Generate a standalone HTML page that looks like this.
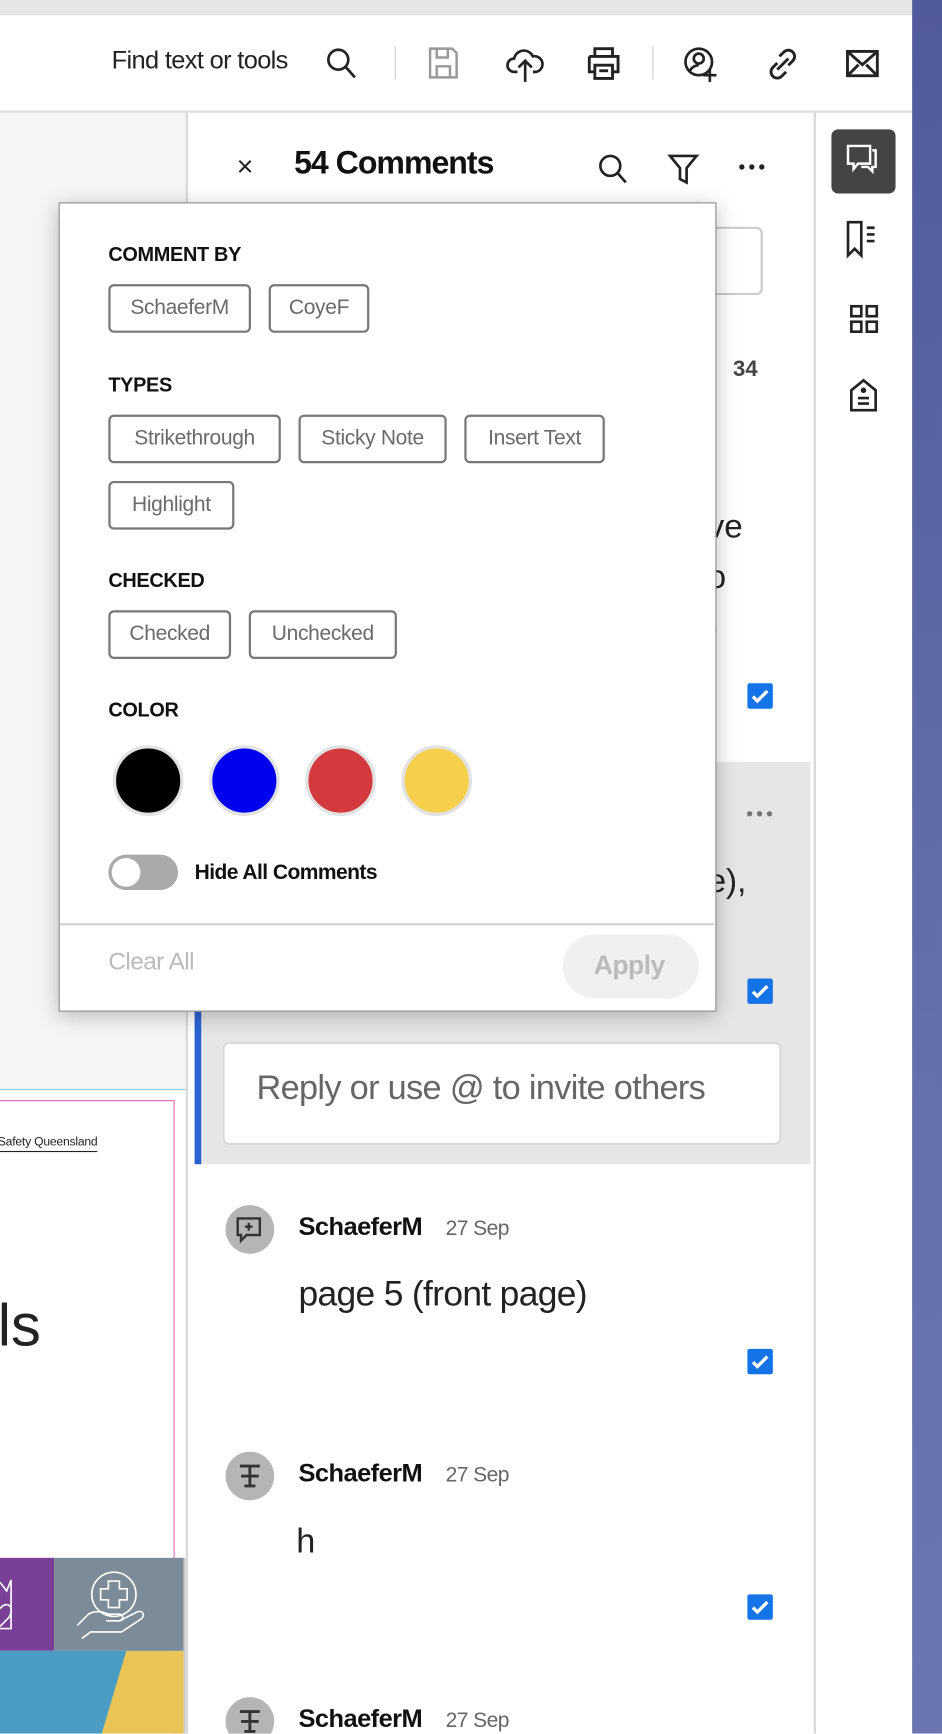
<!DOCTYPE html>
<html><head><meta charset="utf-8">
<style>
html,body{margin:0;padding:0;width:942px;height:1734px;overflow:hidden;background:#fff;}
#s{position:absolute;left:0;top:0;width:852px;height:1568px;transform:scale(1.10563);transform-origin:0 0;font-family:"Liberation Sans",sans-serif;overflow:hidden;}
.a{position:absolute;}
.t{position:absolute;white-space:nowrap;line-height:1;}
.chip{position:absolute;height:40px;border:2px solid #777;border-radius:5px;color:#6a6a6a;font-size:19px;line-height:40px;text-align:center;box-sizing:content-box;letter-spacing:-0.3px;}
.h{position:absolute;font-size:18px;font-weight:bold;color:#111;letter-spacing:-0.3px;}
.cb{position:absolute;width:23px;height:23px;background:#1473e6;border-radius:2px;}
.av{position:absolute;width:44px;height:44px;border-radius:50%;background:#b5b5b5;}
.nm{position:absolute;font-size:23px;font-weight:bold;color:#111;letter-spacing:-0.5px;}
.dt{position:absolute;font-size:19px;color:#666;letter-spacing:-0.5px;}
.circ{position:absolute;width:58px;height:58px;border-radius:50%;border:3px solid #e2e2e2;}
svg{position:absolute;overflow:visible;}
</style></head><body><div id="s">
<div class="a" style="left:0;top:0;width:825px;height:14px;background:#e6e6e6"></div>
<div class="a" style="left:0;top:14px;width:825px;height:86px;background:#fff;border-bottom:2px solid #dcdcdc"></div>
<div class="t" style="left:101px;top:43px;font-size:23px;color:#222;letter-spacing:-0.6px">Find text or tools</div>
<svg style="left:294px;top:42px" width="30" height="30" fill="none" stroke="#222" stroke-width="2.4"><circle cx="12" cy="12" r="9"/><path d="M19 19l8 9"/></svg>
<div class="a" style="left:357px;top:42px;width:1px;height:30px;background:#ccc"></div>
<svg style="left:387px;top:42px" width="28" height="30" fill="none" stroke="#999" stroke-width="2.2"><path d="M2 2h20l4 4v22H2z"/><path d="M8 2v8h10V2M8 28v-10h12v10"/></svg>
<svg style="left:458px;top:40px" width="34" height="34" fill="none" stroke="#222" stroke-width="2.4"><path d="M10 25H7a6 6 0 0 1 0-12 9 9 0 0 1 17-2 6 6 0 0 1 3 14h-3"/><path d="M17 34V15M11 21l6-6 6 6"/></svg>
<svg style="left:530px;top:43px" width="32" height="30" fill="none" stroke="#222" stroke-width="2.6"><path d="M8 8V1h16v7M3 8h26v14h-5M8 22H3V8"/><path d="M8 16h16v12H8z"/><path d="M12 21h8"/></svg>
<div class="a" style="left:590px;top:42px;width:1px;height:30px;background:#ccc"></div>
<svg style="left:618px;top:42px" width="34" height="34" fill="none" stroke="#222" stroke-width="2.4"><circle cx="14" cy="14" r="12"/><circle cx="14" cy="11" r="4.5"/><path d="M6 22c2-4 6-5 8-5"/><path d="M24 20v12M18 26h12"/></svg>
<svg style="left:692px;top:42px" width="32" height="32" fill="none" stroke="#222" stroke-width="2.6"><path d="M13 9l4-4a5 5 0 0 1 8 8l-4 4M19 23l-4 4a5 5 0 0 1-8-8l4-4M11 21l10-10"/></svg>
<svg style="left:765px;top:45px" width="30" height="26" fill="none" stroke="#222" stroke-width="2.6"><rect x="1.5" y="1.5" width="27" height="22"/><path d="M1.5 1.5l13.5 12 13.5-12M1.5 23.5l10-10M28.5 23.5l-10-10"/></svg>

<div class="a" style="left:825px;top:0;width:27px;height:1568px;background:linear-gradient(#515a9c,#6570aa 60%,#6b76b0)"></div>

<div class="a" style="left:0;top:102px;width:168px;height:883px;background:#f5f5f5"></div>
<div class="a" style="left:0;top:985px;width:168px;height:583px;background:#fff;border-top:1px solid #7dd3ee"></div>
<div class="a" style="left:-2px;top:995px;width:158px;height:600px;border:1px solid #e86ab0"></div>
<div class="t" style="left:-2px;top:1028px;font-size:11px;color:#222;border-bottom:1px solid #222;padding-bottom:2px;letter-spacing:-0.2px">Safety Queensland</div>
<div class="t" style="left:-2px;top:1172px;font-size:54px;color:#222">ls</div>
<div class="a" style="left:0;top:1409px;width:49px;height:84px;background:#7a3f96"></div>
<div class="a" style="left:49px;top:1409px;width:117px;height:84px;background:#7b8b97"></div>
<svg style="left:0;top:1425px" width="30" height="50" fill="none" stroke="#fff" stroke-width="1.5"><path d="M0 6l6 8 4-10v44H0"/><path d="M0 30c6-8 14-2 8 8l-8 8"/></svg>
<svg style="left:68px;top:1420px" width="70" height="62" fill="none" stroke="#fff" stroke-width="1.5"><circle cx="35" cy="22" r="20"/><path d="M30 10h10v7h7v10h-7v7H30v-7h-7V17h7z"/><path d="M2 50l10-10c6-4 14-2 18 0h10a3 3 0 0 1 0 6H28M40 46l16-8c4-2 8 2 4 6L42 56H14l-8 6"/></svg>
<div class="a" style="left:0;top:1493px;width:166px;height:75px;background:#4a9cc3"></div>
<div class="a" style="left:92px;top:1493px;width:74px;height:75px;background:#e8c556;clip-path:polygon(30% 0,100% 0,100% 100%,0 100%)"></div>
<div class="a" style="left:166px;top:1409px;width:2px;height:159px;background:#ccc"></div>

<div class="a" style="left:168px;top:102px;width:2px;height:1466px;background:#d8d8d8"></div>
<div class="a" style="left:736px;top:102px;width:2px;height:1466px;background:#d8d8d8"></div>
<div class="t" style="left:214px;top:137px;font-size:26px;color:#222">×</div>
<div class="t" style="left:266px;top:134px;font-size:29px;font-weight:bold;color:#111;letter-spacing:-0.9px">54 Comments</div>
<svg style="left:540px;top:138px" width="30" height="30" fill="none" stroke="#222" stroke-width="2.4"><circle cx="12" cy="12" r="9"/><path d="M19 19l7 8"/></svg>
<svg style="left:604px;top:138px" width="28" height="30" fill="none" stroke="#222" stroke-width="2.4"><path d="M2 3h24L17 14v13l-6-3V14z"/></svg>
<svg style="left:668px;top:148px" width="26" height="6" fill="#222"><circle cx="3" cy="3" r="2.4"/><circle cx="12" cy="3" r="2.4"/><circle cx="21" cy="3" r="2.4"/></svg>

<div class="a" style="left:600px;top:205px;width:88px;height:58px;border:2px solid #ccc;border-left:none;border-radius:0 6px 6px 0"></div>
<div class="t" style="left:663px;top:324px;font-size:20px;font-weight:bold;color:#444">34</div>
<div class="t" style="left:640px;top:462px;font-size:30px;color:#222">ve</div>
<div class="t" style="left:640px;top:508px;font-size:30px;color:#222">o</div>
<div class="t" style="left:640px;top:553px;font-size:30px;color:#222">)</div>
<div class="cb" style="left:676px;top:618px"></div>
<svg style="left:676px;top:618px" width="23" height="23" fill="none" stroke="#fff" stroke-width="3"><path d="M5 12l4 4 9-9"/></svg>

<div class="a" style="left:176px;top:689px;width:557px;height:364px;background:#e6e6e6"></div>
<div class="a" style="left:176px;top:870px;width:6px;height:183px;background:#2b62d2"></div>
<svg style="left:675px;top:733px" width="26" height="6" fill="#777"><circle cx="3" cy="3" r="2.4"/><circle cx="12" cy="3" r="2.4"/><circle cx="21" cy="3" r="2.4"/></svg>
<div class="t" style="left:640px;top:783px;font-size:30px;color:#222">e),</div>
<div class="cb" style="left:676px;top:885px"></div>
<svg style="left:676px;top:885px" width="23" height="23" fill="none" stroke="#fff" stroke-width="3"><path d="M5 12l4 4 9-9"/></svg>
<div class="a" style="left:202px;top:943px;width:502px;height:90px;background:#fff;border:1px solid #ccc;border-radius:5px"></div>
<div class="t" style="left:232px;top:968px;font-size:31px;color:#666;letter-spacing:-0.6px">Reply or use @ to invite others</div>

<div class="av" style="left:204px;top:1090px"></div>
<svg style="left:213px;top:1100px" width="26" height="26" fill="none" stroke="#333" stroke-width="2.2"><path d="M2 2h20v15H10l-5 5v-5H2z"/><path d="M12 6v7M8.5 9.5h7"/></svg>
<div class="nm" style="left:270px;top:1096px">SchaeferM</div>
<div class="dt" style="left:403px;top:1101px">27 Sep</div>
<div class="t" style="left:270px;top:1154px;font-size:32px;color:#222;letter-spacing:-0.6px">page 5 (front page)</div>
<div class="cb" style="left:676px;top:1220px"></div>
<svg style="left:676px;top:1220px" width="23" height="23" fill="none" stroke="#fff" stroke-width="3"><path d="M5 12l4 4 9-9"/></svg>

<div class="av" style="left:204px;top:1313px"></div>
<svg style="left:214px;top:1323px" width="24" height="24" fill="none" stroke="#333" stroke-width="2.6"><path d="M3 3h18M12 3v18M4 12h16M7 21h10"/></svg>
<div class="nm" style="left:270px;top:1319px">SchaeferM</div>
<div class="dt" style="left:403px;top:1324px">27 Sep</div>
<div class="t" style="left:268px;top:1378px;font-size:31px;color:#222">h</div>
<div class="cb" style="left:676px;top:1442px"></div>
<svg style="left:676px;top:1442px" width="23" height="23" fill="none" stroke="#fff" stroke-width="3"><path d="M5 12l4 4 9-9"/></svg>

<div class="av" style="left:204px;top:1535px"></div>
<svg style="left:214px;top:1545px" width="24" height="24" fill="none" stroke="#333" stroke-width="2.6"><path d="M3 3h18M12 3v18M4 12h16M7 21h10"/></svg>
<div class="nm" style="left:270px;top:1541px">SchaeferM</div>
<div class="dt" style="left:403px;top:1546px">27 Sep</div>

<div class="a" style="left:752px;top:117px;width:58px;height:58px;background:#444;border-radius:6px"></div>
<svg style="left:766px;top:131px" width="32" height="32" fill="none" stroke="#fff" stroke-width="2.2"><path d="M1 1h20v16H10l-4 5v-5H1z"/><path d="M23 5h3v15h-3v4l-4-4h-6"/></svg>
<svg style="left:766px;top:200px" width="32" height="34" fill="none" stroke="#222" stroke-width="2.4"><path d="M1 1h12v30l-6-6-6 6z"/><path d="M18 6h7M18 12h7M18 18h7"/></svg>
<svg style="left:769px;top:276px" width="26" height="26" fill="none" stroke="#222" stroke-width="2.4"><rect x="1" y="1" width="9" height="9"/><rect x="15" y="1" width="9" height="9"/><rect x="1" y="15" width="9" height="9"/><rect x="15" y="15" width="9" height="9"/></svg>
<svg style="left:769px;top:343px" width="26" height="30" fill="none" stroke="#222" stroke-width="2.4"><path d="M12 1l11 9v18H1V10z"/><circle cx="12" cy="10" r="1.3" fill="#222"/><path d="M7 17h10M7 22h10"/></svg>

<div class="a" style="left:53px;top:183px;width:593px;height:730px;background:#fff;border:1px solid #8a8a8a;box-shadow:0 4px 18px rgba(0,0,0,0.25)"></div>
<div class="h" style="left:98px;top:220px">COMMENT BY</div>
<div class="chip" style="left:98px;top:257px;width:125px">SchaeferM</div>
<div class="chip" style="left:243px;top:257px;width:87px">CoyeF</div>
<div class="h" style="left:98px;top:338px">TYPES</div>
<div class="chip" style="left:98px;top:375px;width:152px">Strikethrough</div>
<div class="chip" style="left:270px;top:375px;width:130px">Sticky Note</div>
<div class="chip" style="left:420px;top:375px;width:123px">Insert Text</div>
<div class="chip" style="left:98px;top:435px;width:110px">Highlight</div>
<div class="h" style="left:98px;top:515px">CHECKED</div>
<div class="chip" style="left:98px;top:552px;width:107px">Checked</div>
<div class="chip" style="left:225px;top:552px;width:130px">Unchecked</div>
<div class="h" style="left:98px;top:632px">COLOR</div>
<div class="circ" style="left:102px;top:674px;background:#000"></div>
<div class="circ" style="left:189px;top:674px;background:#0000f0"></div>
<div class="circ" style="left:276px;top:674px;background:#d43a3d"></div>
<div class="circ" style="left:363px;top:674px;background:#f6d04a"></div>
<div class="a" style="left:98px;top:773px;width:63px;height:32px;border-radius:16px;background:#aaa"></div>
<div class="a" style="left:101px;top:776px;width:26px;height:26px;border-radius:50%;background:#fff"></div>
<div class="t" style="left:176px;top:780px;font-size:19px;font-weight:bold;color:#111;letter-spacing:-0.5px">Hide All Comments</div>
<div class="a" style="left:54px;top:835px;width:592px;height:2px;background:#d4d4d4"></div>
<div class="t" style="left:98px;top:859px;font-size:22px;color:#bbb;letter-spacing:-0.5px">Clear All</div>
<div class="a" style="left:509px;top:845px;width:123px;height:58px;border-radius:29px;background:#f0f0f0"></div>
<div class="t" style="left:537px;top:862px;font-size:24px;font-weight:bold;color:#bbb;letter-spacing:-0.5px">Apply</div>
</div></body></html>
